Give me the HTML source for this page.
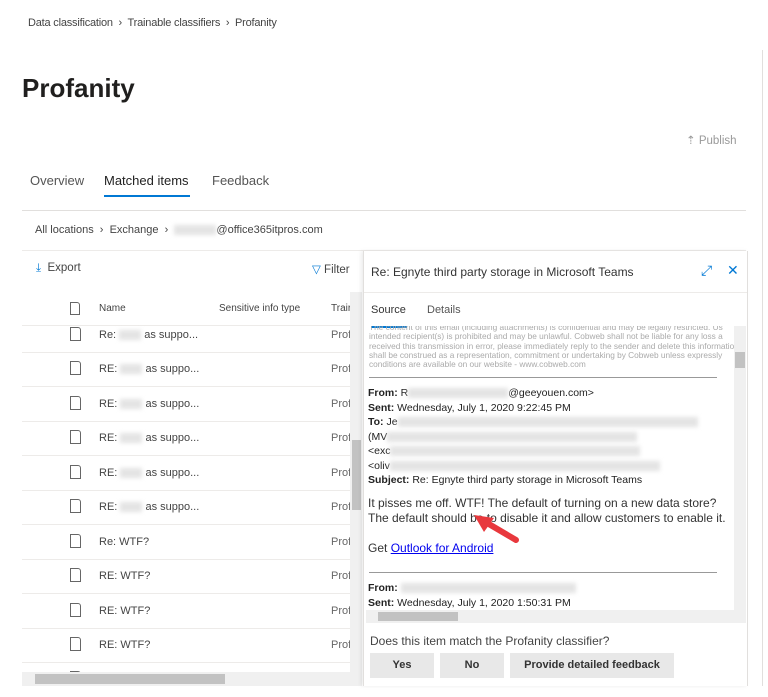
<!DOCTYPE html>
<html><head><meta charset="utf-8"><style>
*{margin:0;padding:0;box-sizing:border-box}
body{width:768px;height:686px;overflow:hidden;background:#fff;font-family:"Liberation Sans",sans-serif;color:#323130;position:relative}
.a{position:absolute;white-space:nowrap}
.blur{display:inline-block;background:#e4e4e4;filter:blur(2px);height:10px;vertical-align:middle}
.row{position:absolute;left:22px;width:328px;height:34.5px;border-bottom:1px solid #edebe9;font-size:11px;color:#444}
.row .ic{position:absolute;left:48px;top:9px;width:11px;height:14px;border:1px solid #666;border-radius:0 3px 0 0}
.row .n{position:absolute;left:77px;top:11px}
.row .p{position:absolute;left:309px;top:11px;color:#666}
.btn{position:absolute;top:653px;height:25px;background:#e8e8e8;font-size:11px;font-weight:bold;color:#333;text-align:center;line-height:25px}
</style></head><body>
<div class="a" style="left:28px;top:17px;font-size:11px;color:#444;letter-spacing:-0.2px">Data classification &nbsp;›&nbsp; Trainable classifiers &nbsp;›&nbsp; Profanity</div>
<div class="a" style="left:22px;top:73px;font-size:26px;font-weight:bold;color:#201f1e">Profanity</div>
<div style="position:absolute;left:762px;top:50px;width:1px;height:636px;background:#e1dfdd"></div>
<div class="a" style="left:686px;top:133px;font-size:11.5px;color:#999">⇡ Publish</div>
<div class="a" style="left:30px;top:173px;font-size:13px;color:#555">Overview</div>
<div class="a" style="left:104px;top:173px;font-size:13px;color:#222">Matched items</div>
<div style="position:absolute;left:104px;top:195px;width:86px;height:2px;background:#0078d4"></div>
<div class="a" style="left:212px;top:173px;font-size:13px;color:#555">Feedback</div>
<div style="position:absolute;left:22px;top:210px;width:724px;height:1px;background:#e1dfdd"></div>
<div class="a" style="left:35px;top:224px;font-size:11px;color:#444">All locations &nbsp;›&nbsp; Exchange &nbsp;›&nbsp; <span class="blur" style="width:42px"></span>@office365itpros.com</div>
<div style="position:absolute;left:22px;top:250px;width:724px;height:1px;background:#edebe9"></div>
<div class="a" style="left:36px;top:262px;font-size:11.5px;color:#444"><span style="color:#0078d4">⤓</span>&nbsp; Export</div>
<div class="a" style="left:312px;top:262px;font-size:11.5px;color:#444"><span style="color:#0078d4">▽</span> Filter</div>
<div style="position:absolute;left:22px;top:292px;width:328px;height:34px;border-bottom:1px solid #edebe9;font-size:10px;color:#444">
<div style="position:absolute;left:48px;top:10px;width:10px;height:13px;border:1px solid #666;border-radius:0 3px 0 0"></div>
<div class="a" style="left:77px;top:11px">Name</div><div class="a" style="left:197px;top:11px">Sensitive info type</div><div class="a" style="left:309px;top:11px">Trair</div></div>
<div class="row" style="top:318px"><div class="ic"></div><div class="n">Re: <span class="blur" style="width:22px"></span> as suppo...</div><div class="p">Prof.</div></div>
<div class="row" style="top:352px"><div class="ic"></div><div class="n">RE: <span class="blur" style="width:22px"></span> as suppo...</div><div class="p">Prof.</div></div>
<div class="row" style="top:387px"><div class="ic"></div><div class="n">RE: <span class="blur" style="width:22px"></span> as suppo...</div><div class="p">Prof.</div></div>
<div class="row" style="top:421px"><div class="ic"></div><div class="n">RE: <span class="blur" style="width:22px"></span> as suppo...</div><div class="p">Prof.</div></div>
<div class="row" style="top:456px"><div class="ic"></div><div class="n">RE: <span class="blur" style="width:22px"></span> as suppo...</div><div class="p">Prof.</div></div>
<div class="row" style="top:490px"><div class="ic"></div><div class="n">RE: <span class="blur" style="width:22px"></span> as suppo...</div><div class="p">Prof.</div></div>
<div class="row" style="top:525px"><div class="ic"></div><div class="n">Re: WTF?</div><div class="p">Prof.</div></div>
<div class="row" style="top:559px"><div class="ic"></div><div class="n">RE: WTF?</div><div class="p">Prof.</div></div>
<div class="row" style="top:594px"><div class="ic"></div><div class="n">RE: WTF?</div><div class="p">Prof.</div></div>
<div class="row" style="top:628px"><div class="ic"></div><div class="n">RE: WTF?</div><div class="p">Prof.</div></div>
<div class="row" style="top:662px;border:none"><div class="ic"></div></div>
<div style="position:absolute;left:350px;top:292px;width:12px;height:380px;background:#f0f0f0"></div>
<div style="position:absolute;left:352px;top:440px;width:9px;height:70px;background:#c2c2c2"></div>
<div style="position:absolute;left:22px;top:672px;width:340px;height:14px;background:#f0f0f0"></div>
<div style="position:absolute;left:35px;top:674px;width:190px;height:10px;background:#c2c2c2"></div>
<div style="position:absolute;left:363px;top:251px;width:385px;height:435px;background:#fff;border-left:1px solid #e1dfdd;border-right:1px solid #e1dfdd;box-shadow:-2px 0 4px rgba(0,0,0,.08)"></div>
<div class="a" style="left:371px;top:265px;font-size:12px;color:#333">Re: Egnyte third party storage in Microsoft Teams</div>
<div class="a" style="left:701px;top:262px;font-size:14px;color:#0078d4">⤢</div>
<div class="a" style="left:727px;top:262px;font-size:14px;color:#0078d4">✕</div>
<div style="position:absolute;left:364px;top:292px;width:383px;height:1px;background:#edebe9"></div>
<div class="a" style="left:371px;top:304px;font-size:11px;color:#333">Source</div>
<div class="a" style="left:427px;top:304px;font-size:11px;color:#555">Details</div>
<div style="position:absolute;left:371px;top:326px;width:36px;height:2px;background:#0078d4"></div>
<div style="position:absolute;left:366px;top:326px;width:368px;height:285px;overflow:hidden;font-size:10.5px;color:#222">
<div style="font-size:8.3px;color:#aaa;line-height:9.3px;position:absolute;left:3px;top:-3px;width:365px;white-space:nowrap">The content of this email (including attachments) is confidential and may be legally restricted. Us<br>intended recipient(s) is prohibited and may be unlawful. Cobweb shall not be liable for any loss a<br>received this transmission in error, please immediately reply to the sender and delete this informatio<br>shall be construed as a representation, commitment or undertaking by Cobweb unless expressly<br>conditions are available on our website - www.cobweb.com</div>
<div style="position:absolute;left:3px;top:51px;width:348px;height:1px;background:#999"></div>
<div style="position:absolute;left:2px;top:60px;line-height:14.5px">
<b>From:</b> R<span class="blur" style="width:100px"></span>@geeyouen.com&gt;<br><b>Sent:</b> Wednesday, July 1, 2020 9:22:45 PM<br><b>To:</b> Je<span class="blur" style="width:300px"></span><br>(MV<span class="blur" style="width:250px"></span><br>&lt;exc<span class="blur" style="width:250px"></span><br>&lt;oliv<span class="blur" style="width:270px"></span><br><b>Subject:</b> Re: Egnyte third party storage in Microsoft Teams</div>
<div style="position:absolute;left:2px;top:170px;font-size:12px;line-height:15px;color:#333">It pisses me off. WTF! The default of turning on a new data store?<br>The default should be to disable it and allow customers to enable it.<br><br>Get <span style="color:#00e;text-decoration:underline">Outlook for Android</span></div>
<div style="position:absolute;left:3px;top:246px;width:348px;height:1px;background:#999"></div>
<div style="position:absolute;left:2px;top:255px;line-height:14.5px"><b>From:</b> <span class="blur" style="width:175px"></span><br><b>Sent:</b> Wednesday, July 1, 2020 1:50:31 PM</div>
<svg style="position:absolute;left:104px;top:186px" width="60" height="40"><path d="M12 8 L46 28" stroke="#e8383d" stroke-width="6" stroke-linecap="round"/><path d="M4 3 L24 6 L14 20Z" fill="#e8383d"/></svg>
</div>
<div style="position:absolute;left:734px;top:326px;width:12px;height:284px;background:#f0f0f0"></div>
<div style="position:absolute;left:735px;top:352px;width:10px;height:16px;background:#c2c2c2"></div>
<div style="position:absolute;left:366px;top:610px;width:380px;height:13px;background:#f0f0f0"></div>
<div style="position:absolute;left:378px;top:612px;width:80px;height:9px;background:#c2c2c2"></div>
<div class="a" style="left:370px;top:634px;font-size:12px;color:#444">Does this item match the Profanity classifier?</div>
<div class="btn" style="left:370px;width:64px">Yes</div>
<div class="btn" style="left:440px;width:64px">No</div>
<div class="btn" style="left:510px;width:164px">Provide detailed feedback</div>
</body></html>
